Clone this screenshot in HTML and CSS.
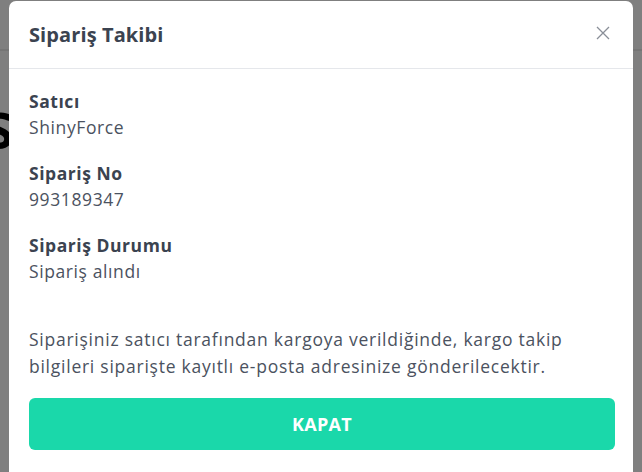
FILE: index.html
```html
<!DOCTYPE html>
<html lang="tr">
<head>
<meta charset="utf-8">
<title>Sipariş Takibi</title>
<link rel="stylesheet" href="styles.css">
</head>
<body>
<div class="page">
  <div class="page-bar"></div>
  <h1 class="page-title">S</h1>
</div>
<div class="overlay">
  <div class="modal">
    <div class="modal-header">
      <h2 class="modal-title">Sipariş Takibi</h2>
      <button class="close" aria-label="Kapat">
        <svg width="14" height="14" viewBox="0 0 14 14"><path d="M1 1L13 13M13 1L1 13" stroke="#8a8f98" stroke-width="1.3" fill="none"/></svg>
      </button>
    </div>
    <div class="modal-body">
      <div class="field">
        <div class="label">Satıcı</div>
        <div class="value">ShinyForce</div>
      </div>
      <div class="field">
        <div class="label">Sipariş No</div>
        <div class="value">993189347</div>
      </div>
      <div class="field">
        <div class="label">Sipariş Durumu</div>
        <div class="value">Sipariş alındı</div>
      </div>
      <p class="note">Siparişiniz satıcı tarafından kargoya verildiğinde, kargo takip bilgileri siparişte kayıtlı e-posta adresinize gönderilecektir.</p>
      <button class="btn">KAPAT</button>
    </div>
  </div>
</div>
</body>
</html>
```
FILE: styles.css
```css
* { box-sizing: border-box; }
html, body { margin: 0; padding: 0; height: 100%; overflow: hidden; }
body { font-family: "Open Sans", "Noto Sans", sans-serif; background: #fff; }
.page { height: 100%; }
.page-bar { height: 51px; border-bottom: 2px solid #eaeaea; }
.page-title { margin: 54px 0 0 -14px; font-size: 50px; font-weight: 700; color: #000; line-height: 1; }
.overlay {
  position: fixed; inset: 0;
  background: rgba(0, 0, 0, 0.5);
  padding: 1px 9px 0 9px;
}
.modal {
  background: #fff;
  border-radius: 7px 7px 0 0;
  height: 520px;
}
.modal-header {
  height: 68px;
  border-bottom: 1px solid #e5e7eb;
  display: flex; align-items: center; justify-content: space-between;
  padding: 0 23px 0 20px;
}
.modal-title { margin: 0; font-size: 20px; font-weight: 700; color: #3b4350; letter-spacing: 0.1px; }
.close { background: none; border: 0; padding: 0; display: flex; cursor: pointer; margin-top: -4px; }
.modal-body { padding: 19px 18px 0 20px; }
.field { margin-bottom: 20px; }
.label { font-size: 17.5px; font-weight: 700; color: #3b4350; line-height: 26px; letter-spacing: 0.55px; }
.value { font-size: 17.5px; color: #4b5260; line-height: 26px; letter-spacing: 0.6px; }
.note { margin: 42px 0 0; font-size: 17.5px; line-height: 27px; color: #4b5260; letter-spacing: 0.75px; }
.btn {
  margin-top: 18px;
  width: 100%; height: 52px;
  border: 0; border-radius: 6px;
  background: #1ad8aa; color: #fff;
  font-family: inherit; font-size: 18px; font-weight: 700; letter-spacing: 0.3px;
}
```
